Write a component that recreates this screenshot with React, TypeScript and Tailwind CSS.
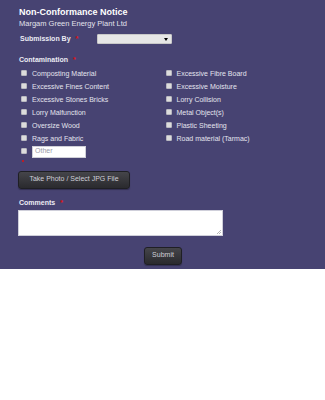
import React from "react";

const left = [
  "Composting Material",
  "Excessive Fines Content",
  "Excessive Stones Bricks",
  "Lorry Malfunction",
  "Oversize Wood",
  "Rags and Fabric",
];
const right = [
  "Excessive Fibre Board",
  "Excessive Moisture",
  "Lorry Collision",
  "Metal Object(s)",
  "Plastic Sheeting",
  "Road material (Tarmac)",
];

function Box() {
  return (
    <span className="block w-[6px] h-[6px] shrink-0 bg-[#dcdcdc] border border-[#b8b8c0] rounded-[1px]" />
  );
}

function Item({ label }: { label: string }) {
  return (
    <div className="flex items-center h-[13px] gap-[5px]">
      <Box />
      <span className="text-[7px] leading-[13px] text-[#e4e4ee] whitespace-nowrap">{label}</span>
    </div>
  );
}

export default function App() {
  return (
    <div className="w-[325px] min-h-[400px] bg-white" style={{ fontFamily: '"Liberation Sans", Arial, sans-serif' }}>
      <div className="bg-[#474372] h-[269px] pt-[7px] flex flex-col">
        <div className="pl-[19px] flex flex-col">
          <div className="text-[9px] leading-[10px] font-bold text-white">Non-Conformance Notice</div>
          <div className="mt-[1.5px] text-[7.5px] leading-[9px] text-[#e2e2ec]">Margam Green Energy Plant Ltd</div>

          <div className="mt-[6.5px] flex items-center h-[10px]">
            <div className="w-[78px] pl-[1px] flex items-center text-[7px] leading-[10px] font-bold text-[#ececf4]">
              <span>Submission By</span>
              <span className="ml-[5px] text-[#e01010]">*</span>
            </div>
            <div className="w-[75px] h-[10px] bg-[#e6e6e6] border border-[#c8c8c8] rounded-[1px] flex items-center justify-end pr-[3px]">
              <span className="w-0 h-0 border-l-[2px] border-r-[2px] border-t-[3px] border-l-transparent border-r-transparent border-t-black" />
            </div>
          </div>

          <div className="mt-[10.5px] flex items-center text-[7px] leading-[9px] font-bold text-[#ececf4]">
            <span>Contamination</span>
            <span className="ml-[5px] text-[#e01010]">*</span>
          </div>

          <div className="mt-[3px] pl-[2px] grid grid-cols-[144.5px_1fr]">
            <div className="flex flex-col">
              {left.map((l) => (
                <Item key={l} label={l} />
              ))}
            </div>
            <div className="flex flex-col">
              {right.map((l) => (
                <Item key={l} label={l} />
              ))}
            </div>
          </div>

          <div className="mt-[1px] pl-[2px] flex items-start gap-[5px]">
            <span className="mt-[2px]"><Box /></span>
            <div className="w-[54px] h-[12px] bg-white border border-[#d0d0d8] flex items-center pl-[2px] text-[7px] text-[#9a9aa8]">
              Other
            </div>
          </div>
          <div className="mt-[2px] ml-[2.5px] w-[2px] h-[2px] rounded-full bg-[#e01010]" />

          <div className="mt-[9px] -ml-[1px] w-[112px] h-[18px] rounded-[3px] border border-[#1f1f24] bg-gradient-to-b from-[#45454a] to-[#2a2a2e] shadow-[0_1px_1px_rgba(0,0,0,0.3)] flex items-center justify-center text-[7px] text-[#cfcfd8]">
            Take Photo / Select JPG File
          </div>

          <div className="mt-[9px] flex items-center text-[7px] leading-[9px] font-bold text-[#ececf4]">
            <span>Comments</span>
            <span className="ml-[5px] text-[#e01010]">*</span>
          </div>

          <div className="mt-[3px] -ml-[1px] w-[205px] h-[26px] bg-white border border-[#cfcfda] relative">
            <svg className="absolute right-[1px] bottom-[1px]" width="4" height="4" viewBox="0 0 4 4">
              <path d="M4 0 L0 4 M4 2 L2 4" stroke="#999" strokeWidth="0.7" />
            </svg>
          </div>
        </div>

        <div className="mt-[11px] flex justify-center pl-[1px]">
          <div className="w-[38px] h-[18px] rounded-[3px] border border-[#1f1f24] bg-gradient-to-b from-[#45454a] to-[#2a2a2e] shadow-[0_1px_1px_rgba(0,0,0,0.3)] flex items-center justify-center text-[7px] text-[#cfcfd8]">
            Submit
          </div>
        </div>
      </div>
    </div>
  );
}
